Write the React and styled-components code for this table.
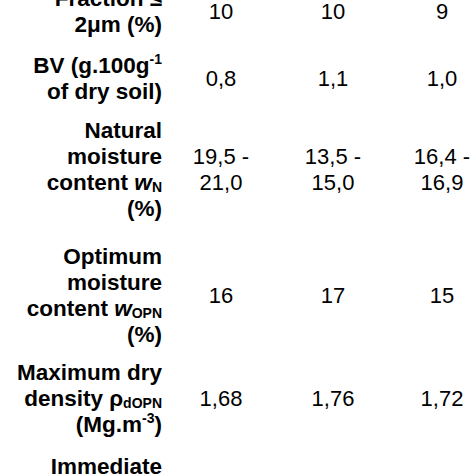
import styled, { createGlobalStyle } from "styled-components";

const GlobalStyle = createGlobalStyle`
  html, body {
    margin: 0;
    padding: 0;
    background: #fff;
    overflow: hidden;
  }
  body {
    font-family: "Liberation Sans", Arial, Helvetica, sans-serif;
    color: #000;
  }
`;

const Page = styled.div`
  width: 474px;
  height: 474px;
  overflow: hidden;
`;

const Table = styled.div`
  display: flex;
  flex-direction: column;
  width: 500px;
  margin-top: -14px;
`;

const Row = styled.div`
  display: grid;
  grid-template-columns: 166px 110px 114px 104px;
  align-items: center;
  padding-top: ${(p) => p.$space || 0}px;
`;

const Label = styled.div`
  font-weight: 700;
  font-size: 22.5px;
  line-height: 26px;
  text-align: right;
  padding-right: 4px;
  white-space: nowrap;
`;

const Value = styled.div`
  font-size: 22px;
  line-height: 26px;
  text-align: center;
  white-space: nowrap;
`;

const Sym = styled.span`
  font-style: italic;
`;

const Sub = styled.sub`
  font-size: 14px;
  vertical-align: -2px;
  line-height: 0;
`;

const Sup = styled.sup`
  font-size: 14px;
  vertical-align: 9px;
  line-height: 0;
`;

const rows = [
  {
    space: 0,
    label: (
      <>
        Fraction ≤<br />2μm (%)
      </>
    ),
    values: ["10", "10", "9"],
  },
  {
    space: 15,
    label: (
      <>
        BV (g.100g<Sup>-1</Sup>
        <br />
        of dry soil)
      </>
    ),
    values: ["0,8", "1,1", "1,0"],
  },
  {
    space: 13,
    label: (
      <>
        Natural
        <br />
        moisture
        <br />
        content <Sym>w</Sym>
        <Sub>N</Sub>
        <br />
        (%)
      </>
    ),
    values: [
      <>
        19,5 -<br />
        21,0
      </>,
      <>
        13,5 -<br />
        15,0
      </>,
      <>
        16,4 -<br />
        16,9
      </>,
    ],
  },
  {
    space: 22,
    label: (
      <>
        Optimum
        <br />
        moisture
        <br />
        content <Sym>w</Sym>
        <Sub>OPN</Sub>
        <br />
        (%)
      </>
    ),
    values: ["16", "17", "15"],
  },
  {
    space: 12,
    label: (
      <>
        Maximum dry
        <br />
        density ρ<Sub>dOPN</Sub>
        <br />
        (Mg.m<Sup>-3</Sup>)
      </>
    ),
    values: ["1,68", "1,76", "1,72"],
  },
  {
    space: 16,
    label: (
      <>
        Immediate
        <br />
        bearing
        <br />
        index IBI
      </>
    ),
    values: ["", "", ""],
  },
];

export default function App() {
  return (
    <Page>
      <GlobalStyle />
      <Table>
        {rows.map((r, i) => (
          <Row key={i} $space={r.space}>
            <Label>{r.label}</Label>
            {r.values.map((v, j) => (
              <Value key={j}>{v}</Value>
            ))}
          </Row>
        ))}
      </Table>
    </Page>
  );
}
